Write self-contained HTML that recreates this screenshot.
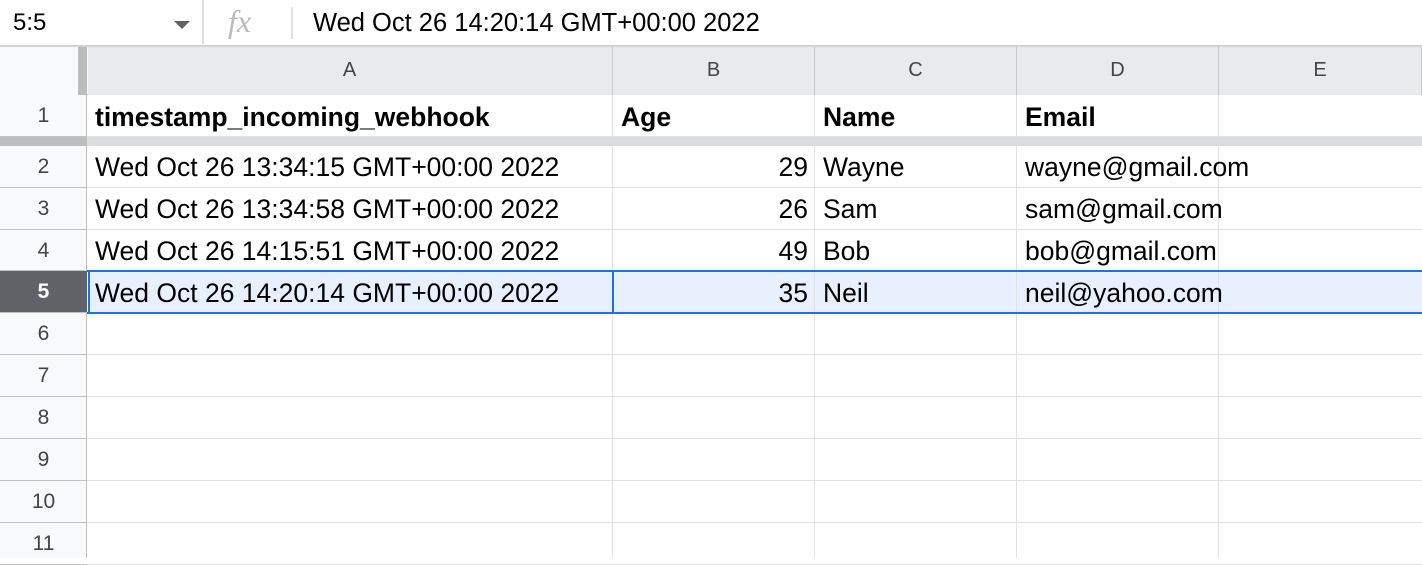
<!DOCTYPE html>
<html><head><style>
body{margin:0;width:1422px;height:558px;overflow:hidden;background:#fff;font-family:"Liberation Sans",Arial,sans-serif;position:relative}
.a{position:absolute;box-sizing:border-box}
.t{font-size:26.5px;color:#000;white-space:nowrap;line-height:42px}
.h{font-size:21px;color:#444;text-align:center}
</style></head><body>
<div class="a" style="left:0;top:0;width:1422px;height:47px;border-bottom:2px solid #d3d3d3"></div>
<div class="a t" style="left:13px;top:2px;line-height:42px;font-size:24px">5:5</div>
<div class="a" style="left:174px;top:21px;width:0;height:0;border-left:8px solid transparent;border-right:8px solid transparent;border-top:8px solid #5f6368"></div>
<div class="a" style="left:202px;top:0;width:2px;height:44px;background:#e0e0e0"></div>
<div class="a" style="left:228px;top:2px;font-family:'Liberation Serif',serif;font-style:italic;font-size:32px;color:#bbb;line-height:38px">fx</div>
<div class="a" style="left:291px;top:7px;width:2px;height:32px;background:#e0e0e0"></div>
<div class="a t" style="left:313px;top:2px;font-size:25.5px">Wed Oct 26 14:20:14 GMT+00:00 2022</div>
<div class="a" style="left:0;top:47px;width:1422px;height:48px;background:#f8f9fa;border-bottom:1px solid #c0c0c0"></div>
<div class="a" style="left:88px;top:47px;width:1334px;height:48px;background:#e8eaed"></div>
<div class="a" style="left:0;top:47px;width:78px;height:48px;background:#f8f9fa"></div>
<div class="a" style="left:78px;top:47px;width:9px;height:48px;background:#bdbdbd"></div>
<div class="a" style="left:0;top:95px;width:87px;height:463px;background:#f8f9fa;border-right:1px solid #c0c0c0"></div>
<div id="g"></div>
<script>
var cols=[87,613,815,1017,1219,1422],letters=['A','B','C','D','E'];
var rows=[[95,137],[146,188],[188,230],[230,271],[271,313],[313,355],[355,397],[397,439],[439,481],[481,523],[523,565]];
var h='';
for(var i=0;i<5;i++){h+='<div class="a h" style="font-size:20px;left:'+cols[i]+'px;top:47px;width:'+(cols[i+1]-cols[i])+'px;height:48px;line-height:46px;border-right:1px solid #c8c8c8">'+letters[i]+'</div>';}
h+='<div class="a" style="left:87px;top:271px;width:1335px;height:42px;background:#e8f0fe"></div>';
h+='<div class="a" style="left:0;top:271px;width:87px;height:42px;background:#5f6368"></div>';
for(var r=0;r<rows.length;r++){var y=rows[r][0],y2=rows[r][1];
 h+='<div class="a h" style="left:0;top:'+y+'px;width:87px;height:'+(y2-y)+'px;line-height:'+(y2-y)+'px;color:'+(r==4?'#fff':'#444')+';font-weight:'+(r==4?'bold':'normal')+'">'+(r+1)+'</div>';
 h+='<div class="a" style="left:87px;top:'+(y2-1)+'px;width:1335px;height:1px;background:#e2e2e2"></div>';
 h+='<div class="a" style="left:0;top:'+(y2-1)+'px;width:87px;height:1px;background:#c0c0c0"></div>';
}
for(var i=1;i<5;i++){h+='<div class="a" style="left:'+(cols[i]-1)+'px;top:95px;width:1px;height:463px;background:#e2e2e2"></div>';}
h+='<div class="a" style="left:87px;top:137px;width:1335px;height:9px;background:#dadce0"></div>';
h+='<div class="a" style="left:0;top:137px;width:87px;height:9px;background:#bdbdbd"></div>';
h+='<div class="a" style="left:87px;top:270px;width:1335px;height:2px;background:#1a73e8"></div>';
h+='<div class="a" style="left:87px;top:312px;width:1335px;height:2px;background:#1a73e8"></div>';
h+='<div class="a" style="left:88px;top:270px;width:526px;height:44px;border:2px solid #1a73e8"></div>';
document.getElementById('g').innerHTML=h;
</script>
<div class="a t" style="left:95px;top:96px;font-weight:bold">timestamp_incoming_webhook</div>
<div class="a t" style="left:621px;top:96px;font-weight:bold">Age</div>
<div class="a t" style="left:823px;top:96px;font-weight:bold">Name</div>
<div class="a t" style="left:1025px;top:96px;font-weight:bold">Email</div>

<div class="a t" style="left:95px;top:146px">Wed Oct 26 13:34:15 GMT+00:00 2022</div>
<div class="a t" style="left:613px;top:146px;width:195px;text-align:right">29</div>
<div class="a t" style="left:823px;top:146px">Wayne</div>
<div class="a t" style="left:1025px;top:146px">wayne@gmail.com</div>

<div class="a t" style="left:95px;top:188px">Wed Oct 26 13:34:58 GMT+00:00 2022</div>
<div class="a t" style="left:613px;top:188px;width:195px;text-align:right">26</div>
<div class="a t" style="left:823px;top:188px">Sam</div>
<div class="a t" style="left:1025px;top:188px">sam@gmail.com</div>

<div class="a t" style="left:95px;top:230px">Wed Oct 26 14:15:51 GMT+00:00 2022</div>
<div class="a t" style="left:613px;top:230px;width:195px;text-align:right">49</div>
<div class="a t" style="left:823px;top:230px">Bob</div>
<div class="a t" style="left:1025px;top:230px">bob@gmail.com</div>

<div class="a t" style="left:95px;top:272px">Wed Oct 26 14:20:14 GMT+00:00 2022</div>
<div class="a t" style="left:613px;top:272px;width:195px;text-align:right">35</div>
<div class="a t" style="left:823px;top:272px">Neil</div>
<div class="a t" style="left:1025px;top:272px">neil@yahoo.com</div>
</body></html>
